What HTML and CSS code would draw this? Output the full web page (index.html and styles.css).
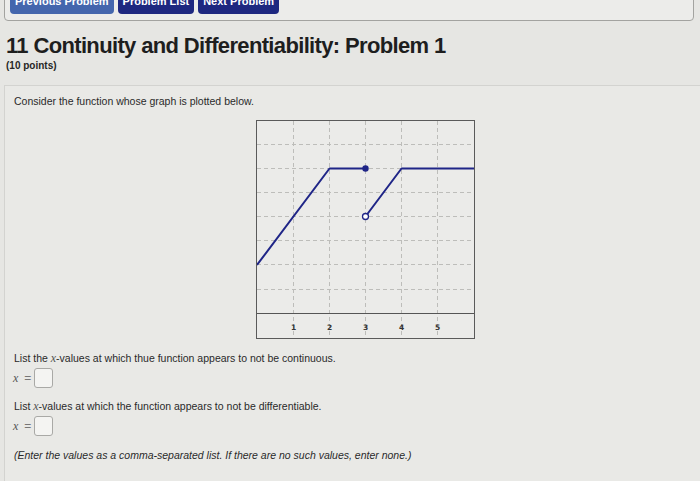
FILE: index.html
```html
<!DOCTYPE html>
<html lang="en">
<head>
    <meta charset="UTF-8">
    <title>Continuity and Differentiability</title>
    <link rel="stylesheet" href="styles.css">
</head>
<body>
    <div class="nav">
        <button class="nav__button nav__button--prev">Previous Problem</button>
        <button class="nav__button">Problem List</button>
        <button class="nav__button">Next Problem</button>
    </div>

    <h1 class="title">11 Continuity and Differentiability: Problem 1</h1>
    <div class="points">(10 points)</div>

    <div class="problem">
        <p class="problem__text">Consider the function whose graph is plotted below.</p>

        <div class="graph">
            <svg width="217" height="217" viewBox="0 0 217 217">
                <g stroke="#bdbdba" stroke-width="1" stroke-dasharray="4 3" fill="none">
                    <line x1="36.5" y1="0" x2="36.5" y2="217"/>
                    <line x1="72.5" y1="0" x2="72.5" y2="217"/>
                    <line x1="108.5" y1="0" x2="108.5" y2="217"/>
                    <line x1="144.5" y1="0" x2="144.5" y2="217"/>
                    <line x1="180.5" y1="0" x2="180.5" y2="217"/>
                    <line x1="0" y1="23.5" x2="217" y2="23.5"/>
                    <line x1="0" y1="47.5" x2="217" y2="47.5"/>
                    <line x1="0" y1="71.5" x2="217" y2="71.5"/>
                    <line x1="0" y1="95.5" x2="217" y2="95.5"/>
                    <line x1="0" y1="119.5" x2="217" y2="119.5"/>
                    <line x1="0" y1="143.5" x2="217" y2="143.5"/>
                    <line x1="0" y1="168.5" x2="217" y2="168.5"/>
                </g>
                <line x1="0" y1="192.5" x2="217" y2="192.5" stroke="#555" stroke-width="1"/>
                <g class="graph__labels" text-anchor="middle">
                    <text x="36.5" y="209">1</text>
                    <text x="72.5" y="209">2</text>
                    <text x="108.5" y="209">3</text>
                    <text x="144.5" y="209">4</text>
                    <text x="180.5" y="209">5</text>
                </g>
                <g stroke="#1f2587" stroke-width="2" fill="none" stroke-linejoin="round">
                    <polyline points="0,144 72.5,47.5 108.5,47.5"/>
                    <polyline points="108.5,95.5 144.5,47.5 217,47.5"/>
                </g>
                <circle cx="108.5" cy="47.5" r="3.2" fill="#1f2587"/>
                <circle cx="108.5" cy="95.5" r="3" fill="#fff" stroke="#1f2587" stroke-width="1.3"/>
            </svg>
        </div>

        <p class="problem__text problem__text--q1">List the <i class="var">x</i>-values at which thue function appears to not be continuous.</p>
        <div class="answer">
            <span class="var">x</span><span class="answer__eq">=</span><span class="answer__box"></span>
        </div>

        <p class="problem__text problem__text--q2">List <i class="var">x</i>-values at which the function appears to not be differentiable.</p>
        <div class="answer">
            <span class="var">x</span><span class="answer__eq">=</span><span class="answer__box"></span>
        </div>

        <p class="problem__note">(Enter the values as a comma-separated list. If there are no such values, enter none.)</p>
    </div>
</body>
</html>
```

FILE: styles.css
```css
body {
    margin: 0;
    background-color: #e6e6e3;
    font-family: "Liberation Sans", Arial, sans-serif;
    color: #262626;
    overflow: hidden;
}
.nav {
    display: flex;
    gap: 4px;
    margin: -14px 6px 0 4px;
    padding: 0 5px 6px;
    border: 1px solid #a3a3a0;
    border-radius: 0 0 4px 4px;
    background-color: #ececea;
}
.nav__button {
    height: 27px;
    padding: 0 5px;
    border: none;
    border-radius: 4px;
    background-color: #1e2880;
    color: #fff;
    font-family: "Liberation Sans", Arial, sans-serif;
    font-size: 11px;
    font-weight: bold;
}
.nav__button--prev {
    background-color: #4466ad;
}
.title {
    margin: 11px 0 0 6px;
    font-size: 22px;
    line-height: 27px;
    letter-spacing: -0.65px;
    font-weight: bold;
    color: #1e1e1e;
}
.points {
    margin: 1px 0 0 6px;
    font-size: 10px;
    line-height: 12px;
    font-weight: bold;
}
.problem {
    margin: 13px 0 0 4px;
    padding: 9px 0 0 9px;
    border-top: 1px solid #d3d3d0;
    border-left: 1px solid #d3d3d0;
    background-color: #e9e9e6;
    height: 400px;
}
.problem__text,
.problem__note {
    margin: 0;
    font-size: 10.5px;
    line-height: 13px;
    color: #2a2a2a;
}
.problem__text--q1 {
    margin-top: 13px;
}
.problem__text--q2 {
    margin-top: 12px;
}
.problem__note {
    margin-top: 13px;
    font-style: italic;
}
.graph {
    margin: 12px 0 0 242px;
    width: 217px;
    height: 217px;
    border: 1px solid #5a5a5a;
    background-color: #ebebe9;
}
.graph svg {
    display: block;
}
.graph__labels {
    font-family: "DejaVu Sans", sans-serif;
    font-size: 7.5px;
    font-weight: bold;
    fill: #333;
}
.var {
    font-family: "Liberation Serif", "Times New Roman", serif;
    font-style: italic;
    font-size: 12px;
    color: #555;
}
.answer {
    display: flex;
    align-items: center;
    height: 20px;
    margin-top: 3px;
}
.answer .var {
    margin-left: -1px;
}
.answer__eq {
    margin: 0 3px 0 6px;
    font-size: 12px;
    color: #777;
}
.answer__box {
    width: 17px;
    height: 18px;
    border: 1px solid #a9a9a6;
    border-radius: 3px;
    background-color: #f4f4f2;
}
```
